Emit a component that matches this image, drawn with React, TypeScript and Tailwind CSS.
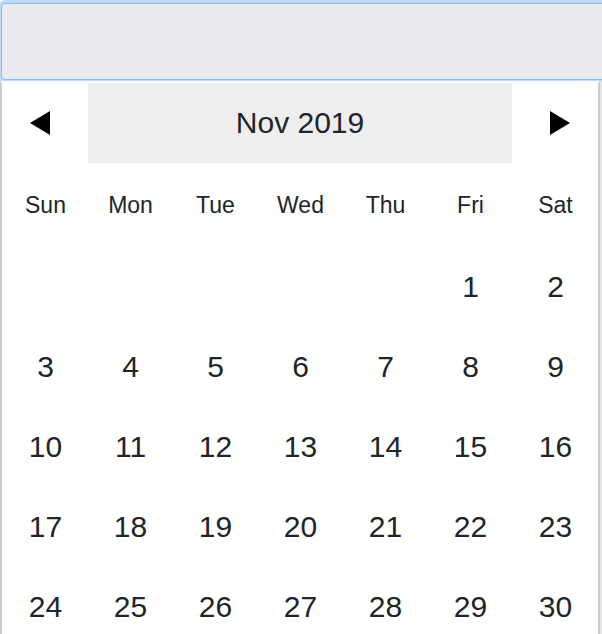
const DAYS = ["Sun", "Mon", "Tue", "Wed", "Thu", "Fri", "Sat"];

function buildWeeks(): (number | null)[][] {
  // Nov 2019 starts on a Friday
  const cells: (number | null)[] = [null, null, null, null, null];
  for (let d = 1; d <= 30; d++) cells.push(d);
  while (cells.length % 7) cells.push(null);
  const weeks: (number | null)[][] = [];
  for (let i = 0; i < cells.length; i += 7) weeks.push(cells.slice(i, i + 7));
  return weeks;
}

function Arrow({ dir }: { dir: "left" | "right" }) {
  return (
    <svg width="20" height="24" viewBox="0 0 20 24" className="block">
      {dir === "left" ? <polygon points="20,0 20,24 0,12" fill="#000" /> : <polygon points="0,0 0,24 20,12" fill="#000" />}
    </svg>
  );
}

export default function App() {
  const weeks = buildWeeks();
  return (
    <div
      className="relative w-[602px] h-[634px] overflow-hidden bg-white text-[#212529]"
      style={{ fontFamily: '"Liberation Sans", Arial, sans-serif' }}
    >
      {/* date input with focus ring */}
      <div className="ml-[1px] mt-[3px] h-[77px] w-[700px] rounded-[4px] border border-[#80bdff] bg-[#eaebef] shadow-[0_0_0_3px_#c0dbfb]" />

      {/* page content peeking at the right edge */}
      <div className="absolute right-0 top-[82px] bottom-0 w-[2px] bg-[#e6e6e6]" />

      {/* calendar popup */}
      <div className="relative mt-[1px] w-[600px] border-x-2 border-t-2 border-x-[#cbcbcb] border-t-white bg-white">
        <div className="flex h-[80px]">
          <div className="flex w-[86px] items-center pl-[28px]">
            <Arrow dir="left" />
          </div>
          <div className="flex w-[424px] items-center justify-center bg-[#eeeeee] text-[30px] leading-none">
            Nov 2019
          </div>
          <div className="flex w-[86px] items-center pl-[38px]">
            <Arrow dir="right" />
          </div>
        </div>

        <div className="grid h-[84px] grid-cols-[repeat(7,85px)] items-center pl-[1px]">
          {DAYS.map((d) => (
            <div key={d} className="text-center text-[23px] leading-none">
              {d}
            </div>
          ))}
        </div>

        {weeks.map((w, i) => (
          <div key={i} className="grid h-[80px] grid-cols-[repeat(7,85px)] items-center pl-[1px]">
            {w.map((d, j) => (
              <div key={j} className="text-center text-[30px] leading-none">
                {d ?? ""}
              </div>
            ))}
          </div>
        ))}
      </div>
    </div>
  );
}
